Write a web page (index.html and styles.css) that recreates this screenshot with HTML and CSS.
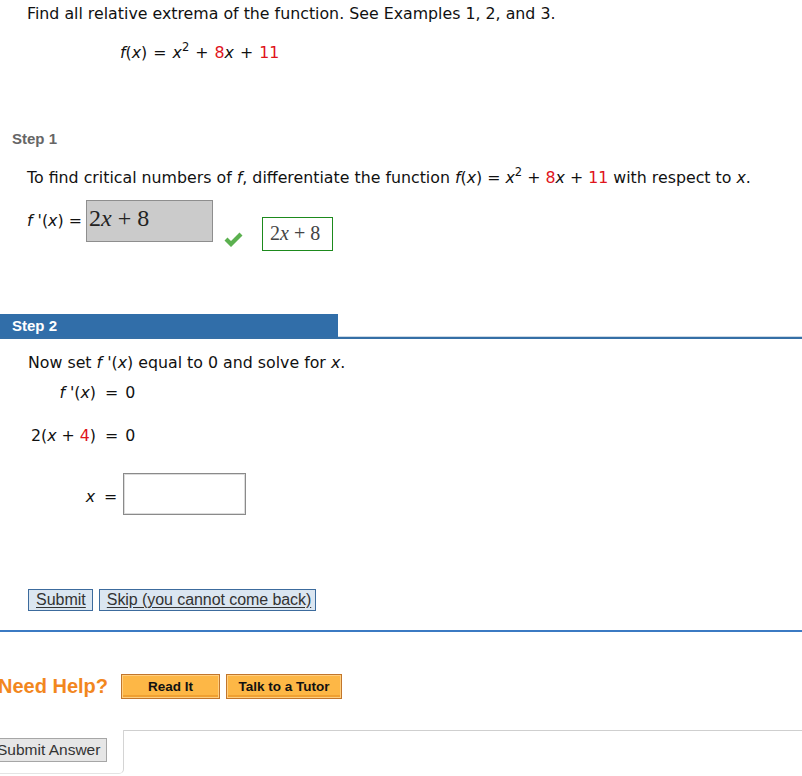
FILE: index.html
```html
<!DOCTYPE html>
<html>
<head>
<meta charset="utf-8">
<link rel="stylesheet" href="styles.css">
</head>
<body>
<div class="page">
  <p class="prompt">Find all relative extrema of the function. See Examples 1, 2, and 3.</p>
  <div class="formula"><i>f</i>(<i>x</i>) = <i>x</i><sup>2</sup> + <span class="red">8</span><i>x</i> + <span class="red">11</span></div>

  <div class="step-label">Step 1</div>
  <p class="text step1-text">To find critical numbers of <i>f</i>, differentiate the function <i>f</i>(<i>x</i>) = <i>x</i><sup>2</sup> + <span class="red">8</span><i>x</i> + <span class="red">11</span> with respect to <i>x</i>.</p>
  <div class="answer-row">
    <span class="answer-label"><i>f</i> '(<i>x</i>) =</span>
    <span class="answer-box math">2<i>x</i> + 8</span>
    <svg class="check" width="19" height="16" viewBox="0 0 19 16"><path d="M0.5 8.5 L3.5 5.5 L7 9 L15.5 0.5 L18.5 3.5 L7 15 Z" fill="#5bb04f"/></svg>
    <span class="correct-box math">2<i>x</i> + 8</span>
  </div>

  <div class="step2-head">
    <div class="step2-bar">Step 2</div>
    <div class="step2-rest"></div>
  </div>
  <p class="text step2-text">Now set <i>f</i> '(<i>x</i>) equal to 0 and solve for <i>x</i>.</p>
  <div class="eq-row first">
    <span class="lhs"><i>f</i> '(<i>x</i>)</span><span class="eq">=</span><span class="val">0</span>
  </div>
  <div class="eq-row second">
    <span class="lhs">2(<i>x</i> + <span class="red">4</span>)</span><span class="eq">=</span><span class="val">0</span>
  </div>
  <div class="eq-row third">
    <span class="lhs"><i>x</i></span><span class="eq">=</span><span class="input"></span>
  </div>

  <div class="btn-row">
    <span class="btn-blue">Submit</span>
    <span class="btn-blue skip">Skip (you cannot come back)</span>
  </div>
  <div class="blue-line"></div>

  <div class="help-row">
    <span class="need-help">Need Help?</span>
    <span class="btn-orange read">Read It</span>
    <span class="btn-orange tutor">Talk to a Tutor</span>
  </div>

  <div class="bottom">
    <div class="bottom-left"><span class="btn-gray">Submit Answer</span></div>
    <div class="bottom-right"></div>
  </div>
</div>
</body>
</html>
```

FILE: styles.css
```css
html, body {
  margin: 0;
  padding: 0;
  background: #fff;
}
.page {
  font-family: "DejaVu Sans", Verdana, sans-serif;
  font-size: 15.8px;
  color: #111;
  width: 802px;
  overflow: hidden;
  height: 776px;
}
p { margin: 0; }
i { font-style: italic; }
sup { font-size: 11.5px; line-height: 0; vertical-align: 7px; }
.red { color: #e0141b; }
.prompt {
  margin: 4px 0 0 27px;
  line-height: 20px;
}
.formula {
  margin: 19px 0 0 120px;
  line-height: 20px;
  word-spacing: 1px;
}
.step-label {
  margin: 67px 0 0 12px;
  font-family: "Liberation Sans", Arial, sans-serif;
  font-weight: bold;
  font-size: 15px;
  line-height: 18px;
  color: #666;
}
.text { line-height: 20px; }
.step1-text { margin: 20px 0 0 27px; }
.answer-row {
  display: flex;
  align-items: flex-start;
  margin: 12px 0 0 27px;
  height: 50px;
}
.answer-label {
  width: 59px;
  margin-top: 11px;
  line-height: 20px;
  white-space: nowrap;
}
.math {
  font-family: "Liberation Serif", "Times New Roman", serif;
}
.answer-box {
  box-sizing: border-box;
  width: 127px;
  height: 42px;
  background: #cbcbcb;
  border: 1px solid #8e8e8e;
  font-size: 24px;
  line-height: 34px;
  padding-left: 2px;
  color: #222;
}
.check {
  margin: 32px 0 0 11px;
}
.correct-box {
  box-sizing: border-box;
  margin: 17px 0 0 19px;
  width: 71px;
  height: 34px;
  border: 1px solid #1d8a1d;
  font-size: 20px;
  line-height: 30px;
  padding-left: 7px;
  color: #444;
}
.step2-head {
  display: flex;
  margin-top: 64px;
  border-bottom: 2px solid #356fa6;
}
.step2-bar {
  width: 326px;
  height: 23px;
  background: #316ea9;
  color: #fff;
  font-family: "Liberation Sans", Arial, sans-serif;
  font-weight: bold;
  font-size: 15px;
  line-height: 23px;
  padding-left: 12px;
}
.step2-rest {
  flex: 1;
  border-bottom: 1px solid #cbd9e6;
}
.step2-text { margin: 14px 0 0 28px; }
.eq-row {
  display: flex;
  align-items: center;
  line-height: 20px;
}
.eq-row .lhs {
  width: 96px;
  text-align: right;
  white-space: nowrap;
}
.eq-row .eq { margin-left: 9px; }
.eq-row .val { margin-left: 7px; }
.eq-row.first { margin-top: 10px; height: 20px; }
.eq-row.second { margin-top: 23px; height: 20px; }
.eq-row.third { margin-top: 27px; height: 42px; }
.eq-row.third .lhs { padding-top: 6px; width: 95px; }
.eq-row.third .eq { padding-top: 6px; }
.input {
  display: inline-block;
  box-sizing: border-box;
  width: 123px;
  height: 42px;
  margin-left: 6px;
  border: 1px solid #8a8a8a;
  box-shadow: inset 0 0 0 1px #dcdcdc;
  background: #fff;
}
.btn-row {
  display: flex;
  gap: 6px;
  margin: 74px 0 0 28px;
}
.btn-blue {
  box-sizing: border-box;
  height: 22px;
  padding: 0 6px 0 7px;
  background: #dbe6f1;
  border: 1px solid #3c6b9d;
  font-family: "Liberation Sans", Arial, sans-serif;
  font-size: 16px;
  line-height: 20px;
  color: #333;
  text-decoration: underline;
  text-underline-offset: 2px;
}
.btn-blue.skip { padding: 0 4px 0 7px; letter-spacing: -0.07px; }
.blue-line {
  margin-top: 19px;
  height: 2px;
  background: #3b7ac3;
}
.help-row {
  display: flex;
  align-items: center;
  margin: 42px 0 0 -2px;
  height: 25px;
}
.need-help {
  font-family: "Liberation Sans", Arial, sans-serif;
  font-weight: bold;
  font-size: 20px;
  color: #f2871e;
  width: 123px;
}
.btn-orange {
  box-sizing: border-box;
  height: 25px;
  background: #fdb746;
  border: 1px solid #c2762c;
  box-shadow: inset 0 0 0 1px #ffcf80, inset 0 -2px 0 1px #f0a030;
  font-family: "Liberation Sans", Arial, sans-serif;
  font-weight: bold;
  font-size: 13.5px;
  line-height: 23px;
  color: #111;
  text-align: center;
}
.read { width: 99px; }
.tutor { width: 116px; margin-left: 6px; }
.bottom {
  display: flex;
  margin-top: 31px;
  height: 46px;
}
.bottom-left {
  box-sizing: border-box;
  height: 44px;
  border-right: 1px solid #d4d4d4;
  border-bottom: 1px solid #e4e4e4;
  border-bottom-right-radius: 5px;
  padding-top: 8px;
  margin-left: -8px;
  width: 132px;
}
.bottom-right {
  flex: 1;
  border-top: 1px solid #cfcfcf;
  height: 0;
}
.btn-gray {
  display: inline-block;
  box-sizing: border-box;
  height: 24px;
  padding: 0 6px 0 4px;
  background: #e6e6e6;
  border: 1px solid #a6a6a6;
  font-family: "Liberation Sans", Arial, sans-serif;
  font-size: 15.5px;
  line-height: 22px;
  color: #333;
}
```
